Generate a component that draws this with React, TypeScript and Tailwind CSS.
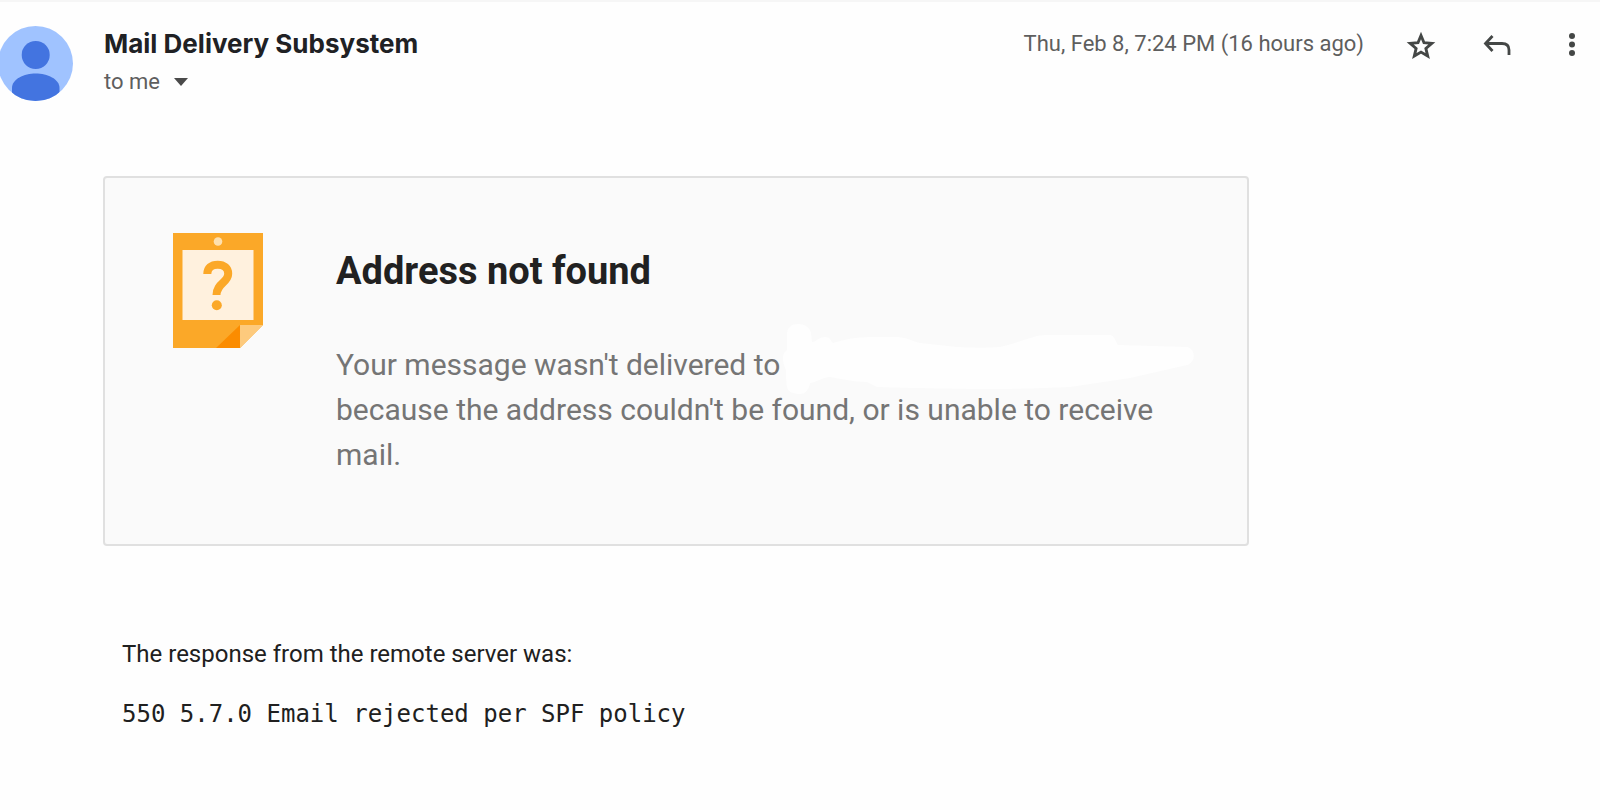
import React from "react";

function Avatar() {
  return (
    <svg viewBox="0 0 75 75" className="h-[75px] w-[75px] shrink-0" aria-hidden="true">
      <defs>
        <clipPath id="avatar-disc">
          <circle cx="35.500" cy="37.500" r="37.500" />
        </clipPath>
      </defs>
      <g clipPath="url(#avatar-disc)">
        <rect width="75" height="75" fill="#a0c3ff" />
        <circle cx="35.700" cy="29" r="14" fill="#4374e0" />
        <path d="M12 75V62c0-9 12-14.500 23.700-14.500S59.500 53 59.500 62v13z" fill="#4374e0" />
      </g>
    </svg>
  );
}

function NoteIcon() {
  return (
    <svg viewBox="0 0 90 115" className="h-[115px] w-[90px] shrink-0" aria-hidden="true">
      <path d="M0 0h90v92L67 115H0z" fill="#fba828" />
      <rect x="9.500" y="17" width="71" height="70" fill="#fff1de" />
      <circle cx="45" cy="8.500" r="4.300" fill="#fee0ae" />
      <path d="M67 92v23H43z" fill="#fb8c00" />
      <path d="M67 92h23l-23 23z" fill="#fdca7d" />
      <path
        d="M34.300 41c0-6 4-9.300 10.400-9.300 6.500 0 10.500 3.500 10.500 9 0 9-11.700 9.500-11.700 21.300"
        fill="none"
        stroke="#fba828"
        strokeWidth="8"
      />
      <circle cx="43.800" cy="72.300" r="5" fill="#fba828" />
    </svg>
  );
}

function Redaction() {
  return (
    <svg
      viewBox="0 0 416 70"
      className="absolute -top-[18px] left-full h-[70px] w-[416px] max-w-none"
      aria-hidden="true"
    >
      <path
        d="M7 9C8 3 12 0 18 0s12 3 13 9l1 9c4 0 7-5 13-5s6 5 8 6c12-4 24-6 37-6h27c8 0 15 4 23 6l37 4c14 1 30 1 43 0 12-3 24-7 37-11 4-1 8-1 12-1h61c4 0 5 6 8 10l69 2c9 2 9 15 0 18l-57 13-60 9c-60 3-130 2-193 0l-10-5c-13 0-25-3-37-5-8 0-14 6-20 6-1 6-4 11-10 11s-12-2-13-7c-1-6-1-11-1-17-3-6-4-13-2-17l3-3z"
        fill="#fefefe"
      />
    </svg>
  );
}

export default function App() {
  return (
    <main className="min-h-screen border-t-2 border-[#f6f6f6] bg-[#fefefe] font-['Roboto','Liberation_Sans',sans-serif] text-[#202020]">
      <header className="flex items-start gap-[29px] pt-6 pr-2.5">
        <Avatar />
        <div className="flex grow items-start justify-between">
          <div>
            <h1 className="font-['Inter',sans-serif] text-[26px] leading-9 font-bold text-[#202124]">
              Mail Delivery Subsystem
            </h1>
            <button type="button" className="mt-1 flex items-center gap-3.5 text-[22px] leading-8 text-[#5e5e5e]">
              to me
              <svg viewBox="0 0 14 8" className="h-2 w-3.5" aria-hidden="true">
                <path d="M0 0h14L7 8z" fill="#4a4a4a" />
              </svg>
            </button>
          </div>
          <div className="flex items-center text-[#444746]">
            <time className="mr-[38px] text-[22px] leading-9 text-[#5e5e5e]">Thu, Feb 8, 7:24 PM (16 hours ago)</time>
            <button type="button" aria-label="Star">
              <svg viewBox="0 0 36 36" className="h-9 w-9" fill="none" stroke="currentColor" strokeWidth="2.900" aria-hidden="true">
                <path d="M19 9.500l3 7.200 7.800.700-5.900 5.100 1.800 7.600-6.700-4-6.700 4 1.800-7.600-5.900-5.100 7.800-.700z" />
              </svg>
            </button>
            <button type="button" aria-label="Reply" className="ml-10">
              <svg viewBox="0 0 36 36" className="h-9 w-9" fill="none" stroke="currentColor" strokeWidth="2.800" aria-hidden="true">
                <path d="M14.500 10 7.500 17.500l7 7.500M7.500 17.500H24c4.500 0 7 2.500 7 6.500v5" />
              </svg>
            </button>
            <button type="button" aria-label="More" className="ml-10">
              <svg viewBox="0 0 36 36" className="h-9 w-9" fill="currentColor" aria-hidden="true">
                <circle cx="18" cy="10" r="3" />
                <circle cx="18" cy="18.500" r="3" />
                <circle cx="18" cy="27" r="3" />
              </svg>
            </button>
          </div>
        </div>
      </header>

      <div className="mt-[75px] ml-[103px]">
        <section className="flex max-w-[1146px] gap-[73px] rounded-sm border-2 border-[#e0e0e0] bg-[#fafafa] pt-[55px] pr-12 pb-[67px] pl-[68px]">
          <NoteIcon />
          <div>
            <h2 className="mt-4 text-[38px] leading-11 font-bold text-[#212121]">Address not found</h2>
            <p className="mt-[49px] text-[30px] leading-[45px] text-[#757575]">
              <span className="relative inline-block">
                Your message wasn't delivered to
                <Redaction />
              </span>
              <br />
              because the address couldn't be found, or is unable to receive mail.
            </p>
          </div>
        </section>
        <div className="mt-[90px] ml-[19px]">
          <p className="text-2xl leading-9">The response from the remote server was:</p>
          <p className="mt-6 font-['DejaVu_Sans_Mono',monospace] text-2xl leading-9">
            550 5.7.0 Email rejected per SPF policy
          </p>
        </div>
      </div>
    </main>
  );
}
